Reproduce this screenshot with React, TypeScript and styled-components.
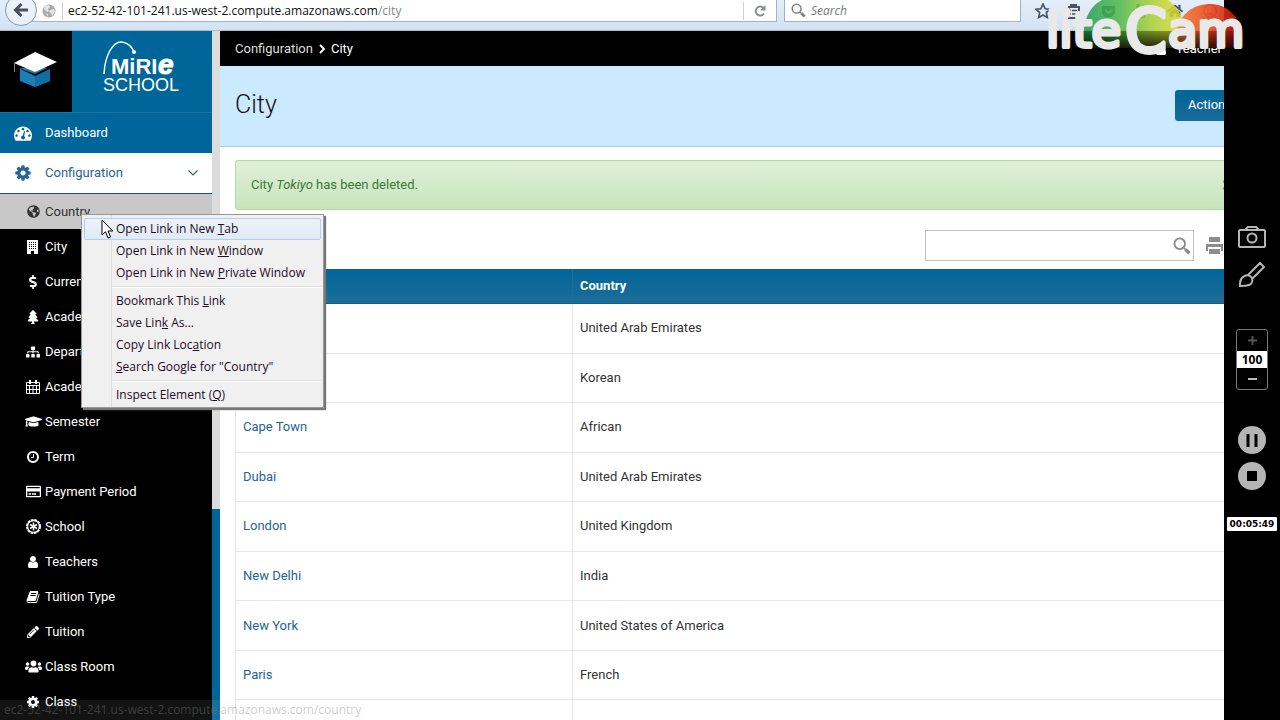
import React from 'react';
import styled, { createGlobalStyle } from 'styled-components';
import {
  FaGlobeAmericas, FaDollarSign, FaTree, FaSitemap, FaGraduationCap,
  FaRegCreditCard, FaPencilAlt, FaUsers, FaGetPocket, FaHome, FaDownload, FaRegSmile,
} from 'react-icons/fa';

const blue = '#006699';
const ui = '"Open Sans", "Noto Sans", sans-serif';

const Global = createGlobalStyle`
  *, *::before, *::after { box-sizing: border-box; }
  body { margin: 0; background: #000; font: 13px/20px Roboto, "Liberation Sans", sans-serif; color: #333; }
  ul { list-style: none; margin: 0; padding: 0; }
  a { text-decoration: none; color: inherit; }
  button, input { font: inherit; color: inherit; border: 0; background: none; padding: 0; margin: 0; }
  svg { display: block; flex: none; }
`;

const Screen = styled.div`
  display: flex;
  height: 100vh;
  overflow: hidden;
  position: relative;
`;
const Browser = styled.div`
  flex: 1;
  min-width: 0;
  display: flex;
  flex-direction: column;
  background: #fff;
  overflow: hidden;
`;

/* browser toolbar */
const Chrome = styled.header`
  flex: none;
  height: 31px;
  display: flex;
  align-items: flex-start;
  background: linear-gradient(#e3eefa, #d3e2f2);
  border-bottom: 1px solid #a9bccf;
  font-family: ${ui};
`;
const BackButton = styled.button`
  width: 32px;
  height: 32px;
  margin: -6px 0 0 5px;
  flex: none;
  border: 1px solid #8497ab;
  border-radius: 50%;
  background: #e9f1fa;
  display: grid;
  place-items: center;
  position: relative;
`;
const UrlBar = styled.div`
  flex: 1;
  height: 22px;
  margin-left: -8px;
  padding-left: 13px;
  display: flex;
  align-items: center;
  background: #fff;
  border: solid #9fb3c8;
  border-width: 0 1px 1px 0;
`;
const Divider = styled.span`
  width: 1px;
  height: 18px;
  margin-left: 6px;
  background: #ccd3da;
`;
const Address = styled.p`
  flex: 1;
  margin: 0 0 0 5px;
  font-size: 12px;
  color: #111;
  white-space: nowrap;
  span { color: #888; }
`;
const Reload = styled.button`
  width: 32px;
  display: grid;
  place-items: center;
`;
const ChromeSearch = styled.label`
  width: 237px;
  height: 22px;
  margin: 0 14px 0 7px;
  padding-left: 6px;
  display: flex;
  align-items: center;
  gap: 5px;
  background: #fff;
  border: solid #9fb3c8;
  border-width: 0 1px 1px;
  input { width: 100%; font-size: 12px; font-style: italic; }
  input::placeholder { color: #777; opacity: 1; }
`;
const ChromeIcons = styled.div`
  width: 189px;
  height: 22px;
  display: flex;
  align-items: center;
  gap: 14px;
  color: #4a535e;
`;
const ChromeIcon = styled.button<{ $wide?: boolean }>`
  width: ${p => (p.$wide ? '22px' : '16px')};
`;

/* page frame */
const Page = styled.div`
  flex: 1;
  min-height: 0;
  display: flex;
`;
const Sidebar = styled.aside`
  width: 212px;
  flex: none;
  background: #000;
  color: #fff;
  overflow: hidden;
`;
const Brand = styled.div`
  display: flex;
  height: 81px;
  background: ${blue};
`;
const BrandMark = styled.div`
  width: 72px;
  background: #000;
`;
const Scrollbar = styled.div`
  width: 8px;
  flex: none;
  background: ${blue};
`;
const Thumb = styled.div`
  height: 478px;
  background: #dcdcdc;
`;
const TopLink = styled.a<{ $open?: boolean }>`
  display: flex;
  align-items: center;
  height: 41px;
  padding: 0 14px;
  gap: 13px;
  background: ${p => (p.$open ? '#fff' : blue)};
  color: ${p => (p.$open ? '#2a6590' : '#fff')};
  border: solid ${p => (p.$open ? '#20516e' : '#1a75a3')};
  border-width: ${p => (p.$open ? '0 0 1px' : '1px 0 0')};
  span { flex: 1; }
`;
const SubLink = styled.a<{ $hover?: boolean }>`
  display: flex;
  align-items: center;
  height: 35px;
  padding-left: 25px;
  gap: 4px;
  background: ${p => (p.$hover ? '#c8c8c8' : '#000')};
  color: ${p => (p.$hover ? '#333' : '#fff')};
`;
const IconSlot = styled.span`
  width: 16px;
  display: grid;
  place-items: center;
`;

/* content */
const Content = styled.main`
  flex: 1;
  min-width: 0;
  overflow: hidden;
`;
const Crumbs = styled.nav`
  height: 35px;
  padding: 0 2px 0 15px;
  display: flex;
  align-items: center;
  gap: 5px;
  background: #000;
  color: #fff;
  a { color: #ddd; }
`;
const UserLink = styled.button`
  margin-left: auto;
  display: flex;
  align-items: center;
  gap: 8px;
`;
const TitleBar = styled.div`
  height: 81px;
  padding: 0 0 2px 15px;
  display: flex;
  align-items: center;
  justify-content: space-between;
  background: #cceaff;
  border-bottom: 1px solid #b4c9d6;
`;
const Title = styled.h1`
  margin: 0;
  font-size: 25px;
  line-height: 32px;
  font-weight: 300;
  color: #111;
`;
const ActionButton = styled.button`
  width: 49px;
  height: 31px;
  padding-left: 13px;
  text-align: left;
  background: linear-gradient(${blue}, #196b98);
  color: #fff;
  border-radius: 3px 0 0 3px;
`;
const Body = styled.div`
  padding: 13px 0 0 15px;
`;
const Alert = styled.div`
  height: 50px;
  padding-left: 15px;
  display: flex;
  align-items: center;
  justify-content: space-between;
  overflow: hidden;
  color: #3c763d;
  background: linear-gradient(#dff0d8, #c8e5bc);
  border: 1px solid #b2dba1;
  border-right: 0;
  border-radius: 4px 0 0 4px;
  p { margin: 0; }
`;
const Close = styled.button`
  margin-right: -8px;
  color: #8aa583;
`;
const Tools = styled.div`
  display: flex;
  align-items: center;
  justify-content: flex-end;
  gap: 12px;
  margin: 20px 0 8px;
  color: #888;
`;
const SearchBox = styled.label`
  width: 269px;
  height: 31px;
  padding: 0 2px 0 8px;
  display: flex;
  align-items: center;
  border: 1px solid #c5c0c8;
  background: #fff;
  input { flex: 1; min-width: 0; outline: 0; }
`;
const PrintButton = styled.button`
  width: 18px;
`;
const Table = styled.table`
  width: 100%;
  height: 481px;
  border-collapse: separate;
  border-spacing: 0;
  border-left: 1px solid #e4e4e4;
  th, td { padding: 0 7px; text-align: left; }
  th { height: 35px; color: #fff; background: linear-gradient(${blue}, #1c6d98); border-bottom: 1px solid #0a5e8a; }
  td { border-bottom: 1px solid #e6e6e6; }
  th:first-child, td:first-child { width: 337px; border-right: 1px solid #e6e6e6; }
  th:first-child { border-right-color: #1c6d98; }
  a { color: #23649a; }
`;

/* recorder strip */
const Recorder = styled.aside`
  width: 56px;
  flex: none;
  padding-top: 224px;
  display: flex;
  flex-direction: column;
  align-items: center;
  background: #000;
  color: #b5b5b5;
`;
const RoundButton = styled.button`
  width: 28px;
  height: 28px;
  margin-bottom: 8px;
`;
const ToolButton = styled.button`
  height: 28px;
  margin-bottom: 8px;
`;
const Zoom = styled.div`
  width: 32px;
  height: 61px;
  margin: 33px 0 36px;
  display: flex;
  flex-direction: column;
  border: 1px solid #777;
  border-radius: 3px;
  text-align: center;
  button { flex: 1; display: grid; place-items: center; }
  output { height: 17px; line-height: 17px; background: #fff; color: #000; font-size: 12px; font-weight: 700; font-family: "Open Sans", sans-serif; }
`;
const Timer = styled.time`
  margin-top: 19px;
  width: 50px;
  height: 14px;
  border-radius: 1px;
  background: #fff;
  color: #000;
  text-align: center;
  font: 700 9px/14px "DejaVu Sans", sans-serif;
  white-space: nowrap;
`;

/* overlays */
const Menu = styled.ul`
  position: absolute;
  left: 81px;
  top: 214px;
  width: 243px;
  && { padding: 3px 2px 1px; }
  border: 1px solid #979797;
  background: linear-gradient(90deg, #f0f0f0 29px, #dedede 29px, #dedede 30px, #f0f0f0 30px);
  box-shadow: 2px 2px 1px #777;
  font-family: ${ui};
  font-size: 12px;
  color: #1c0d24;
`;
const MenuItem = styled.button<{ $active?: boolean }>`
  display: block;
  width: 100%;
  height: 22px;
  padding-left: 31px;
  text-align: left;
  white-space: nowrap;
  border: 1px solid ${p => (p.$active ? '#aecff7' : 'transparent')};
  border-radius: 2px;
  background: ${p => (p.$active ? 'linear-gradient(#eff3f8, #e0e9f5)' : 'none')};
`;
const Separator = styled.li`
  height: 6px;
  margin-left: 28px;
  padding-top: 2px;
  &::after { content: ''; display: block; height: 2px; background: #dedede; border-bottom: 1px solid #fff; }
`;
const Pointer = styled.svg`
  position: absolute;
  left: 101px;
  top: 219px;
`;
const Status = styled.div`
  position: absolute;
  left: 0;
  bottom: 0;
  height: 20px;
  padding: 0 4px;
  font-family: ${ui};
  font-size: 12px;
  background: rgba(240, 240, 240, 0.08);
  color: rgba(130, 130, 130, 0.4);
  border-radius: 0 3px 0 0;
`;
const CamLogo = styled.svg`
  position: absolute;
  right: 32px;
  top: 0;
`;

const Glyph = ({ d, size = 14 }: { d: string; size?: number }) => (
  <svg width={size} height={size} viewBox="0 0 1792 1792" fill="currentColor"><path d={d} /></svg>
);
const gauge = 'M384 1152q0-53-37.5-90.5t-90.5-37.5-90.5 37.5-37.5 90.5 37.5 90.5 90.5 37.5 90.5-37.5 37.5-90.5zm192-448q0-53-37.5-90.5t-90.5-37.5-90.5 37.5-37.5 90.5 37.5 90.5 90.5 37.5 90.5-37.5 37.5-90.5zm428 481l101-382q6-26-7.5-48.5t-38.5-29.5-48 6.5-30 39.5l-101 382q-60 5-107 43.5t-63 98.5q-20 77 20 146t117 89 146-20 89-117q16-60-6-117t-72-91zm660-33q0-53-37.5-90.5t-90.5-37.5-90.5 37.5-37.5 90.5 37.5 90.5 90.5 37.5 90.5-37.5 37.5-90.5zm-640-640q0-53-37.5-90.5t-90.5-37.5-90.5 37.5-37.5 90.5 37.5 90.5 90.5 37.5 90.5-37.5 37.5-90.5zm448 192q0-53-37.5-90.5t-90.5-37.5-90.5 37.5-37.5 90.5 37.5 90.5 90.5 37.5 90.5-37.5 37.5-90.5zm320 448q0 261-141 483-19 29-54 29h-1402q-35 0-54-29-141-221-141-483 0-182 71-348t191-286 286-191 348-71 348 71 286 191 191 286 71 348z';
const cog = 'M1152 896q0-106-75-181t-181-75-181 75-75 181 75 181 181 75 181-75 75-181zm512-109v222q0 12-8 23t-20 13l-185 28q-19 54-39 91 35 50 107 138 10 12 10 25t-9 23q-27 37-99 108t-94 71q-12 0-26-9l-138-108q-44 23-91 38-16 136-29 186-7 28-36 28h-222q-14 0-24.5-8.5t-11.5-21.5l-28-184q-49-16-90-37l-141 107q-10 9-25 9-14 0-25-11-126-114-165-168-7-10-7-23 0-12 8-23 15-21 51-66.5t54-70.5q-27-50-41-99l-183-27q-13-2-21-12.5t-8-23.5v-222q0-12 8-23t19-13l186-28q14-46 39-92-40-57-107-138-10-12-10-24 0-10 9-23 26-36 98.5-107.5t94.5-71.5q13 0 26 10l138 107q44-23 91-38 16-136 29-186 7-28 36-28h222q14 0 24.5 8.5t11.5 21.5l28 184q49 16 90 37l142-107q9-9 24-9 13 0 25 10 129 119 165 170 7 8 7 22 0 12-8 23-15 21-51 66.5t-54 70.5q26 50 41 98l183 28q13 2 21 12.5t8 23.5z';
const user = 'M1536 1399q0 109-62.5 187t-150.5 78h-854q-88 0-150.5-78t-62.5-187q0-85 8.5-160.5t31.5-152 58.5-131 94-89 134.5-34.5q131 128 313 128t313-128q76 0 134.5 34.5t94 89 58.5 131 31.5 152 8.5 160.5zm-256-887q0 159-112.5 271.5t-271.5 112.5-271.5-112.5-112.5-271.5 112.5-271.5 271.5-112.5 271.5 112.5 112.5 271.5z';
const book = 'M1703 478q40 57 18 129l-275 906q-19 64-76.5 107.5t-122.5 43.5h-923q-77 0-148.5-53.5t-99.5-131.5q-24-67-2-127 0-4 3-27t4-37q1-8-3-21.5t-3-19.5q2-11 8-21t16.5-23.5 16.5-23.5q23-38 45-91.5t30-91.5q3-10 .5-30t-.5-28q3-11 17-28t17-23q21-36 42-92t25-90q1-9-2.5-32t.5-28q4-13 22-30.5t22-22.5q19-26 42.5-84.5t27.5-96.5q1-8-3-25.5t-2-26.5q2-8 9-18t18-23 17-21q8-12 16.5-30.5t15-35 16-36 19.5-32 26.5-23.5 36-11.5 47.5 5.5l-1 3q38-9 51-9h761q74 0 114 56t18 130l-274 906q-36 119-71.5 153.5t-128.5 34.5h-869q-27 0-38 15-11 16-1 43 24 70 144 70h923q29 0 56-15.5t35-41.5l300-987q7-22 5-57 38 15 59 43zm-1064 2q-4 13 2 22.5t20 9.5h608q13 0 25.5-9.5t16.5-22.5l21-64q4-13-2-22.5t-20-9.5h-608q-13 0-25.5 9.5t-16.5 22.5zm-83 256q-4 13 2 22.5t20 9.5h608q13 0 25.5-9.5t16.5-22.5l21-64q4-13-2-22.5t-20-9.5h-608q-13 0-25.5 9.5t-16.5 22.5z';

const Calendar = () => (
  <svg width="14" height="14" viewBox="0 0 14 14" fill="none" stroke="currentColor">
    <path d="M.5 2.5h13v11H.5zM.5 5.5h13M.5 9.5h13M3.500 5.5v8M7 5.5v8M10.500 5.5v8" />
    <path d="M4 0v4M10 0v4" strokeWidth="2" />
  </svg>
);
const Tower = () => (
  <svg width="14" height="14" viewBox="0 0 14 14" fill="currentColor">
    <path d="M1 0h11v14H1z" />
    <path d="M3.500 2v7M5.500 2v7M7.500 2v7M9.500 2v7" stroke="#000" strokeDasharray="1 1" />
    <path d="M5 11h3v3H5z" fill="#000" />
  </svg>
);
const Clock = () => (
  <svg width="12" height="12" viewBox="0 0 12 12" fill="none" stroke="currentColor">
    <circle cx="6" cy="6" r="5" strokeWidth="2" /><path d="M6.500 3v3.500H4" />
  </svg>
);
const Wheel = () => (
  <svg width="15" height="15" viewBox="0 0 15 15" fill="none" stroke="currentColor">
    <circle cx="7.5" cy="7.5" r="6.5" strokeWidth="2" strokeDasharray="2.7 .7" />
    <circle cx="7.5" cy="7.5" r="5.8" />
    <path d="M7.5 3.5v8M4 5.5l7 4M11 5.5l-7 4" strokeWidth="1.5" />
  </svg>
);
const Lens = ({ size = 16, color = '#888' }: { size?: number; color?: string }) => (
  <svg width={size} height={size} viewBox="0 0 16 16" fill="none" stroke={color}>
    <circle cx="6" cy="6" r="4.7" strokeWidth="1.6" />
    <path d="M9.5 9.5l1.5 1.5" strokeWidth="1.6" /><path d="M11 11l3.6 3.4" strokeWidth="3" />
  </svg>
);

const items: { name: string; icon: React.ReactNode }[] = [
  { name: 'Country', icon: <FaGlobeAmericas size={13} /> },
  { name: 'City', icon: <Tower /> },
  { name: 'Currency', icon: <FaDollarSign size={14} /> },
  { name: 'Academic', icon: <FaTree size={14} /> },
  { name: 'Department', icon: <FaSitemap size={14} /> },
  { name: 'Academic', icon: <Calendar /> },
  { name: 'Semester', icon: <FaGraduationCap size={17} /> },
  { name: 'Term', icon: <Clock /> },
  { name: 'Payment Period', icon: <FaRegCreditCard size={15} /> },
  { name: 'School', icon: <Wheel /> },
  { name: 'Teachers', icon: <Glyph d={user} /> },
  { name: 'Tuition Type', icon: <Glyph d={book} /> },
  { name: 'Tuition', icon: <FaPencilAlt size={12} /> },
  { name: 'Class Room', icon: <FaUsers size={17} /> },
  { name: 'Class', icon: <Glyph d={cog} /> },
];

const rows: [string, string][] = [
  ['', 'United Arab Emirates'],
  ['', 'Korean'],
  ['Cape Town', 'African'],
  ['Dubai', 'United Arab Emirates'],
  ['London', 'United Kingdom'],
  ['New Delhi', 'India'],
  ['New York', 'United States of America'],
  ['Paris', 'French'],
  ['', '\u00a0'],
];

export default function App() {
  return (
    <Screen>
      <Global />
      <Browser>
        <Chrome>
          <BackButton aria-label="Back">
            <svg width="16" height="14" viewBox="0 0 16 14" fill="none" stroke="#4a5158" strokeWidth="3">
              <path d="M15 7H3M8.5 1L2.5 7l6 6" />
            </svg>
          </BackButton>
          <UrlBar>
            <svg width="14" height="14" viewBox="0 0 14 14">
              <circle cx="7" cy="7" r="6.5" fill="#a9a9a9" />
              <path d="M3 2l4-1 1 2-2 2 1 2-2 1-3-3zM8 6l4-1 1 3-3 4-1-3-2-1zM4 9l2 1v3z" fill="#e4e4e4" />
            </svg>
            <Divider />
            <Address>ec2-52-42-101-241.us-west-2.compute.amazonaws.com<span>/city</span></Address>
            <Divider />
            <Reload aria-label="Reload">
              <svg width="12" height="12" viewBox="0 0 12 12" fill="none" stroke="#8a8f94" strokeWidth="2">
                <path d="M10 8.5A4.5 4.5 0 1 1 9.5 3" /><path d="M11.5 0v5.5H6z" fill="#8a8f94" stroke="none" />
              </svg>
            </Reload>
          </UrlBar>
          <ChromeSearch>
            <Lens size={15} color="#808080" />
            <input type="search" placeholder="Search" aria-label="Search the web" />
          </ChromeSearch>
          <ChromeIcons>
            <ChromeIcon aria-label="Bookmark">
              <svg width="16" height="16" viewBox="0 0 16 16" fill="none" stroke="currentColor" strokeWidth="1.6">
                <path d="M8 1l2.100 4.700 5 .5-3.800 3.400 1.100 5L8 12l-4.400 2.600 1.100-5L.9 6.200l5-.5z" />
              </svg>
            </ChromeIcon>
            <ChromeIcon $wide aria-label="Reading list">
              <svg width="16" height="16" viewBox="0 0 16 16" fill="none" stroke="currentColor" strokeWidth="2">
                <path d="M4 4h10v11H4zM6 4V2h5v2" /><path d="M1 7h5M1 11h5M7 7.500h5M7 11h5" strokeWidth="1.500" />
              </svg>
            </ChromeIcon>
            <ChromeIcon aria-label="Pocket"><FaGetPocket size={15} /></ChromeIcon>
            <ChromeIcon $wide aria-label="Downloads"><FaDownload size={14} /></ChromeIcon>
            <ChromeIcon $wide aria-label="Home"><FaHome size={16} /></ChromeIcon>
            <ChromeIcon aria-label="Hello"><FaRegSmile size={14} /></ChromeIcon>
          </ChromeIcons>
        </Chrome>

        <Page>
          <Sidebar>
            <Brand>
              <BrandMark>
                <svg width="72" height="81" viewBox="0 0 72 81">
                  <path d="M20 37v13l15 6 15-6V37z" fill="#1a7fb5" /><path d="M35 42v14l15-6V37z" fill="#0f6ea3" />
                  <path d="M35 43l20-10-1 3-19 9-19-9z" fill="#000" />
                  <path d="M35 21l22 10-22 10-21-9z" fill="#fff" /><path d="M14.500 32v9" stroke="#888" />
                </svg>
              </BrandMark>
              <svg width="140" height="81" viewBox="0 0 140 81" fill="#fff">
                <path d="M32 43C33 24 41 10 50 11c6 1 10 5 12 10" fill="none" stroke="#fff" strokeWidth="1.500" />
                <circle cx="62" cy="21" r="2" />
                <text x="39" y="43" fontFamily="Liberation Sans" fontSize="22" fontWeight="700">MiRI</text>
                <text x="86" y="43" fontFamily="Liberation Sans" fontSize="28" fontWeight="700" fontStyle="italic" stroke="#fff">e</text>
                <text x="31" y="60" fontFamily="Liberation Sans" fontSize="18">SCHOOL</text>
              </svg>
            </Brand>
            <nav>
              <TopLink href="#dashboard"><Glyph d={gauge} size={18} /><span>Dashboard</span></TopLink>
              <TopLink href="#configuration" $open>
                <Glyph d={cog} size={18} /><span>Configuration</span>
                <svg width="10" height="6" viewBox="0 0 10 6" fill="none" stroke="#2a6590" strokeWidth="1.200"><path d="M.5.500L5 5 9.500.500" /></svg>
              </TopLink>
              <ul>
                {items.map((it, i) => (
                  <li key={i}>
                    <SubLink href="#" $hover={i === 0}><IconSlot>{it.icon}</IconSlot>{it.name}</SubLink>
                  </li>
                ))}
              </ul>
            </nav>
          </Sidebar>
          <Scrollbar><Thumb /></Scrollbar>

          <Content>
            <Crumbs>
              <a href="#configuration">Configuration</a>
              <svg width="8" height="10" viewBox="0 0 8 10" fill="none" stroke="#fff" strokeWidth="1.800"><path d="M2 1l4 4-4 4" /></svg>
              <span>City</span>
              <UserLink><Glyph d={user} />Teacher</UserLink>
            </Crumbs>
            <TitleBar>
              <Title>City</Title>
              <ActionButton>Action</ActionButton>
            </TitleBar>
            <Body>
              <Alert role="alert">
                <p>City <em>Tokiyo</em> has been deleted.</p>
                <Close aria-label="Close">
                  <svg width="10" height="10" viewBox="0 0 10 10" stroke="currentColor" strokeWidth="2"><path d="M1 1l8 8M9 1L1 9" /></svg>
                </Close>
              </Alert>
              <Tools>
                <SearchBox>
                  <input type="text" aria-label="Search cities" />
                  <Lens size={18} />
                </SearchBox>
                <PrintButton aria-label="Print">
                  <svg width="17" height="17" viewBox="0 0 17 17" fill="#8c8c8c">
                    <path d="M3 0h11v5H3zM0 7h17v7h-2v-4H2v4H0zM3 12h11v5H3z" />
                  </svg>
                </PrintButton>
              </Tools>
              <Table>
                <thead><tr><th scope="col" aria-label="City" /><th scope="col">Country</th></tr></thead>
                <tbody>
                  {rows.map(([city, country], i) => (
                    <tr key={i}><td>{city && <a href="#">{city}</a>}</td><td>{country}</td></tr>
                  ))}
                </tbody>
              </Table>
            </Body>
          </Content>
        </Page>
      </Browser>

      <Recorder>
        <ToolButton aria-label="Take a picture">
          <svg width="30" height="26" viewBox="0 0 30 26" fill="none" stroke="currentColor" strokeWidth="2">
            <path d="M3 5h24q1 0 1 1v15q0 1-1 1H3q-1 0-1-1V6q0-1 1-1zM8 5l3-3h8l3 3" /><circle cx="15" cy="13" r="4.500" />
          </svg>
        </ToolButton>
        <ToolButton aria-label="Draw">
          <svg width="28" height="27" viewBox="0 0 28 27" fill="none" stroke="currentColor" strokeWidth="2">
            <path d="M2 25c0-4 0-7 3-9 3-3 7-2 9 1 1 3 0 6-3 7-3 1-6 1-9 1zM10 14L22 2l4 4-12 12" />
          </svg>
        </ToolButton>
        <Zoom>
          <button aria-label="Increase"><svg width="9" height="9" viewBox="0 0 9 9" stroke="#555" strokeWidth="2"><path d="M4.500 0v9M0 4.500h9" /></svg></button>
          <output>100</output>
          <button aria-label="Decrease"><svg width="9" height="2" viewBox="0 0 9 2" stroke="#bbb" strokeWidth="2"><path d="M0 1h9" /></svg></button>
        </Zoom>
        <RoundButton aria-label="Pause">
          <svg width="28" height="28" viewBox="0 0 28 28"><circle cx="14" cy="14" r="14" fill="#b5b5b5" /><path d="M8.500 8h3v13h-3zM16.500 8h3v13h-3z" /></svg>
        </RoundButton>
        <RoundButton aria-label="Stop">
          <svg width="28" height="28" viewBox="0 0 28 28"><circle cx="14" cy="14" r="14" fill="#b5b5b5" /><path d="M9 9h10v10H9z" /></svg>
        </RoundButton>
        <Timer>00:05:49</Timer>
      </Recorder>

      <Status>ec2-52-42-101-241.us-west-2.compute.amazonaws.com/country</Status>

      <Menu>
        <li><MenuItem $active>Open Link in New <u>T</u>ab</MenuItem></li>
        <li><MenuItem>Open Link in New <u>W</u>indow</MenuItem></li>
        <li><MenuItem>Open Link in New <u>P</u>rivate Window</MenuItem></li>
        <Separator />
        <li><MenuItem>Bookmark This <u>L</u>ink</MenuItem></li>
        <li><MenuItem>Save Lin<u>k</u> As...</MenuItem></li>
        <li><MenuItem>Copy Link Loc<u>a</u>tion</MenuItem></li>
        <li><MenuItem><u>S</u>earch Google for "Country"</MenuItem></li>
        <Separator />
        <li><MenuItem>Inspect Element (<u>Q</u>)</MenuItem></li>
      </Menu>
      <Pointer width="13" height="20" viewBox="0 0 13 20">
        <path d="M1 1v15l3.500-3.300L7 19l2.600-1.100L7 12h4.800z" fill="#fff" stroke="#000" />
      </Pointer>

      <CamLogo width="202" height="60" viewBox="0 0 202 60">
        <defs>
          <linearGradient id="meadow"><stop offset="0" stopColor="#1f9a50" /><stop offset=".35" stopColor="#4fb848" /><stop offset=".7" stopColor="#b5d334" /><stop offset="1" stopColor="#eedc28" /></linearGradient>
          <linearGradient id="ember"><stop offset="0" stopColor="#f58233" /><stop offset=".5" stopColor="#ea4a1e" /><stop offset="1" stopColor="#c40808" /></linearGradient>
          <linearGradient id="shade" x1="0" y1="0" x2="0" y2="1"><stop offset="0" stopOpacity=".2" /><stop offset="1" stopOpacity=".8" /></linearGradient>
        </defs>
        <path d="M40 48C34 30 40 8 56 0h66c12 8 22 30 18 48z" fill="url(#meadow)" opacity=".85" />
        <path d="M132 48c-6-24 8-44 32-44s36 24 32 44z" fill="url(#ember)" opacity=".9" />
        <path d="M40 48q-3-8-3-17h160q1 9-1 17z" fill="url(#shade)" />
        <g fill="#e9e9e9" stroke="#e9e9e9" strokeWidth="4" strokeLinejoin="round" fontFamily="DejaVu Sans">
          <text x="0" y="47" fontSize="48">lite</text>
          <text x="79" y="52" fontSize="60">C</text>
          <text x="122" y="47" fontSize="48">am</text>
        </g>
      </CamLogo>
    </Screen>
  );
}
